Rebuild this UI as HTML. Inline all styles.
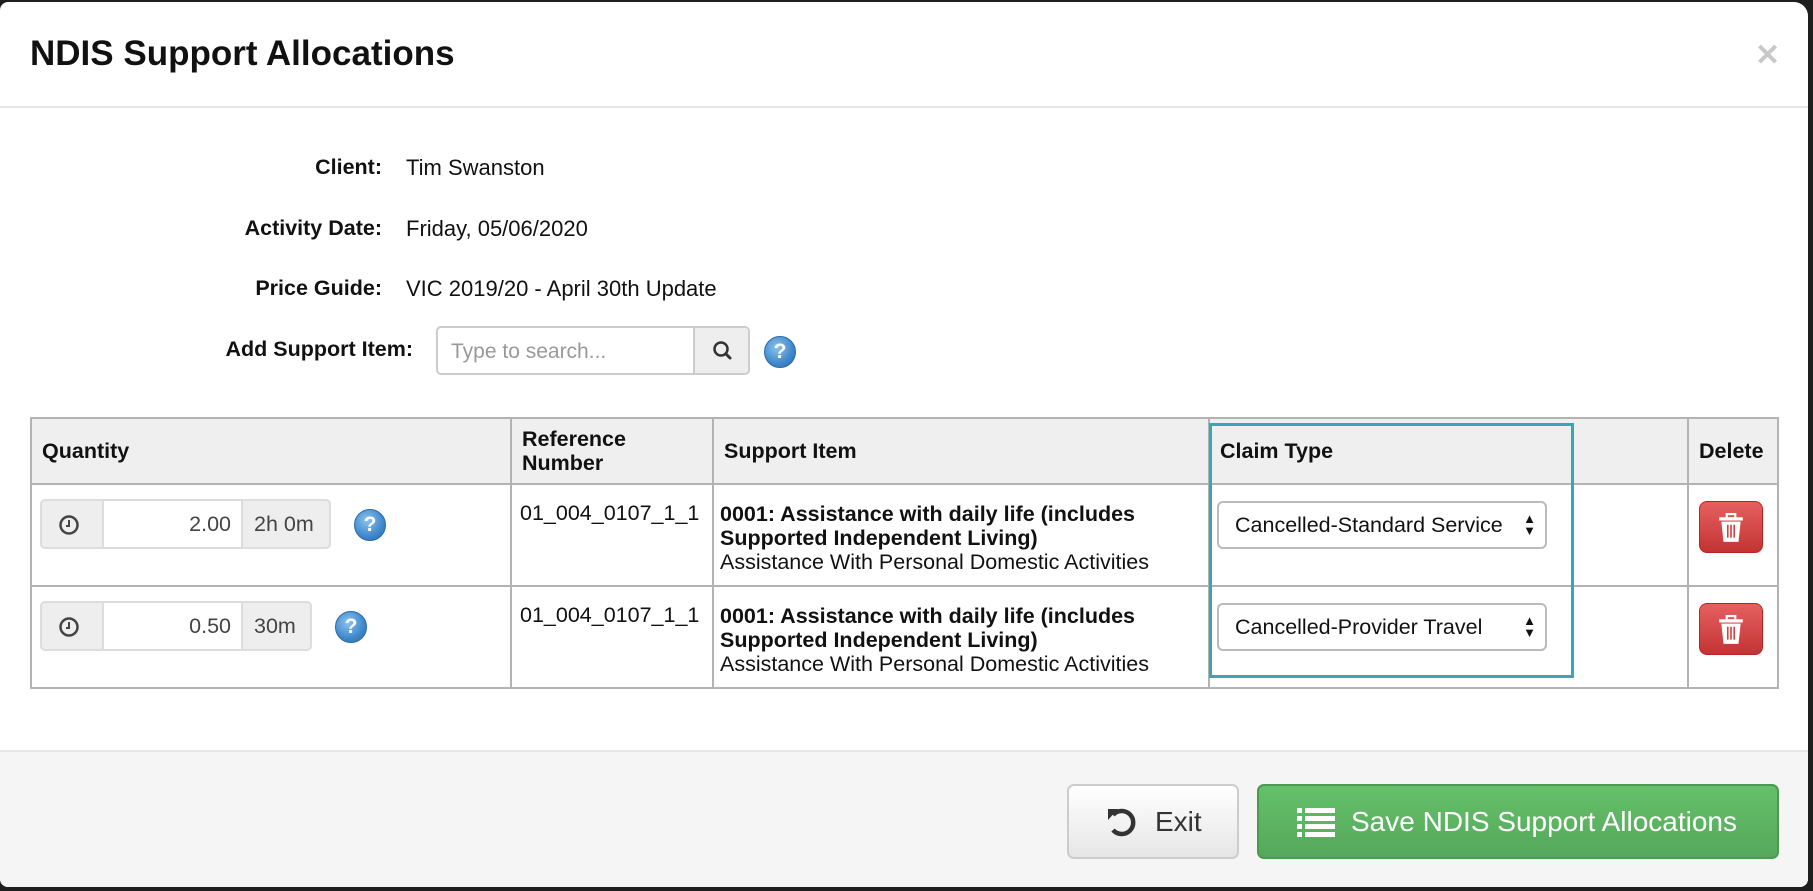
<!DOCTYPE html>
<html><head><meta charset="utf-8"><style>
*{box-sizing:border-box;margin:0;padding:0}
body{width:1813px;height:891px;background:#1e1e1e;position:relative;overflow:hidden;font-family:"Liberation Sans",Arial,sans-serif;color:#111}
.modal{position:absolute;left:0;top:2px;width:1808px;height:885px;background:#fff;border-radius:8px 14px 8px 8px;overflow:hidden}
.a{position:absolute}
.title{left:30px;top:32px;font-size:35px;font-weight:bold;letter-spacing:0px;color:#111}
.close{left:1755px;top:36px;font-size:30px;font-weight:bold;color:#c8c8c8}
.hsep{left:0;top:104px;width:1808px;height:2px;background:#e5e5e5}
.lbl{font-size:21.5px;font-weight:bold;text-align:right;width:300px}
.val{font-size:22px}
.search{left:436px;top:324px;width:314px;height:49px;border:2px solid #ccc;border-radius:5px;background:#fff}
.search .ph{position:absolute;left:13px;top:12px;font-size:21px;color:#999}
.search .btn{position:absolute;left:255px;top:0;width:55px;height:45px;background:#eee;border-left:2px solid #ccc;border-radius:0 4px 4px 0}
.help{width:32px;height:32px;border-radius:50%;background:radial-gradient(circle at 40% 35%,#8cc3ee,#3f88cc 60%,#2a6aa8);border:1px solid #2c6aa5;color:#fff;font-weight:bold;font-size:21px;text-align:center;line-height:30px}
table{position:absolute;left:30px;top:415px;width:1749px;border-collapse:collapse}
td,th{border:2px solid #b3b3b3;vertical-align:top;text-align:left;font-size:21.5px}
th{background:#efefef;height:66px;vertical-align:middle;font-weight:bold;padding:0 10px;line-height:24px}
td{height:102px}
.grp{position:absolute;height:50px;border:2px solid #ddd;border-radius:5px;background:#eee}
.grp .in{position:absolute;left:60px;top:0;width:141px;height:46px;background:#fff;border-left:2px solid #ddd;border-right:2px solid #ddd;text-align:right;padding-right:10px;line-height:46px;font-size:21.5px;color:#444}
.grp .sf{position:absolute;left:212px;top:0;line-height:46px;font-size:21.5px;color:#444}
.sel{position:absolute;left:1217px;width:330px;height:48px;border:2px solid #bbb;border-radius:6px;background:#fff;font-size:21.5px;line-height:44px;padding-left:16px}
.sel .ar{position:absolute;right:9px;top:10px;font-size:13px;line-height:12px}
.del{position:absolute;left:1699px;width:64px;height:52px;border-radius:8px;background:linear-gradient(#e66060,#c33434);border:1px solid #b22}
.sup{position:absolute;left:720px;font-size:21.5px;line-height:24px}
.btnx{position:absolute;top:782px;height:75px;border-radius:7px;font-size:28px;line-height:71px}
</style></head><body>
<div class="modal">
<div class="a title">NDIS Support Allocations</div>
<div class="a close">✕</div>
<div class="a hsep"></div>
<div class="a lbl" style="left:82px;top:153px">Client:</div><div class="a val" style="left:406px;top:153px">Tim Swanston</div>
<div class="a lbl" style="left:82px;top:214px">Activity Date:</div><div class="a val" style="left:406px;top:214px">Friday, 05/06/2020</div>
<div class="a lbl" style="left:82px;top:274px">Price Guide:</div><div class="a val" style="left:406px;top:274px">VIC 2019/20 - April 30th Update</div>
<div class="a lbl" style="left:113px;top:335px">Add Support Item:</div>
<div class="a search"><div class="ph">Type to search...</div><div class="btn"><svg width="55" height="45" viewBox="0 0 55 45"><circle cx="26" cy="21" r="6.5" fill="none" stroke="#333" stroke-width="2.5"/><line x1="31" y1="26" x2="35" y2="30" stroke="#333" stroke-width="3" stroke-linecap="round"/></svg></div></div>
<div class="a help" style="left:764px;top:334px">?</div>

<table>
<tr><th style="width:480px">Quantity</th><th style="width:202px">Reference<br>Number</th><th style="width:496px">Support Item</th><th style="width:479px">Claim Type</th><th>Delete</th></tr>
<tr><td></td><td style="padding:16px 0 0 8px">01_004_0107_1_1</td><td></td><td></td><td></td></tr>
<tr><td></td><td style="padding:16px 0 0 8px">01_004_0107_1_1</td><td></td><td></td><td></td></tr>
</table>
<div class="a" style="left:1209px;top:421px;width:365px;height:255px;border:3px solid #36a7b3"></div>

<div class="grp" style="left:40px;top:497px;width:291px"><svg class="a" style="left:16px;top:13px" width="22" height="22" viewBox="0 0 22 22"><circle cx="11" cy="11" r="8.5" fill="none" stroke="#444" stroke-width="2.5"/><path d="M11 6v6H8" fill="none" stroke="#444" stroke-width="2"/></svg><div class="in">2.00</div><div class="sf">2h 0m</div></div>
<div class="a help" style="left:354px;top:507px">?</div>
<div class="grp" style="left:40px;top:599px;width:272px"><svg class="a" style="left:16px;top:13px" width="22" height="22" viewBox="0 0 22 22"><circle cx="11" cy="11" r="8.5" fill="none" stroke="#444" stroke-width="2.5"/><path d="M11 6v6H8" fill="none" stroke="#444" stroke-width="2"/></svg><div class="in">0.50</div><div class="sf">30m</div></div>
<div class="a help" style="left:335px;top:609px">?</div>

<div class="sup" style="top:500px"><b>0001: Assistance with daily life (includes<br>Supported Independent Living)</b><br>Assistance With Personal Domestic Activities</div>
<div class="sup" style="top:602px"><b>0001: Assistance with daily life (includes<br>Supported Independent Living)</b><br>Assistance With Personal Domestic Activities</div>

<div class="sel" style="top:499px">Cancelled-Standard Service<div class="ar">▲<br>▼</div></div>
<div class="sel" style="top:601px">Cancelled-Provider Travel<div class="ar">▲<br>▼</div></div>

<div class="del" style="top:499px"><svg class="a" style="left:17px;top:11px" width="28" height="30" viewBox="0 0 26 28"><rect x="2" y="4" width="22" height="3" fill="#fff"/><rect x="9" y="1" width="8" height="4" fill="none" stroke="#fff" stroke-width="2"/><path d="M4 8h18l-2 19H6z" fill="#fff"/><path d="M10 11v12M13 11v12M16 11v12" stroke="#d04040" stroke-width="1.5"/></svg></div>
<div class="del" style="top:601px"><svg class="a" style="left:17px;top:11px" width="28" height="30" viewBox="0 0 26 28"><rect x="2" y="4" width="22" height="3" fill="#fff"/><rect x="9" y="1" width="8" height="4" fill="none" stroke="#fff" stroke-width="2"/><path d="M4 8h18l-2 19H6z" fill="#fff"/><path d="M10 11v12M13 11v12M16 11v12" stroke="#d04040" stroke-width="1.5"/></svg></div>

<div class="a" style="left:0;top:748px;width:1808px;height:140px;background:#f5f5f5;border-top:2px solid #e5e5e5"></div>
<div class="btnx" style="left:1067px;width:172px;background:linear-gradient(#fff,#e6e6e6);border:2px solid #ccc;color:#333;padding-left:86px">Exit
<svg class="a" style="left:36px;top:19px" width="34" height="34" viewBox="0 0 34 34"><path d="M8 10 A11.5 11.5 0 1 1 8 25" fill="none" stroke="#333" stroke-width="4.5"/><path d="M3 4 L13 4 L3 15 Z" fill="#333"/></svg></div>
<div class="btnx" style="left:1257px;width:522px;background:linear-gradient(#65c06a,#55a85a);border:2px solid #4c9a50;color:#fff;padding-left:92px">Save NDIS Support Allocations
<svg class="a" style="left:38px;top:21px" width="38" height="32" viewBox="0 0 38 32"><g fill="#fff"><rect x="0" y="1" width="5" height="5"/><rect x="8" y="1" width="30" height="5"/><rect x="0" y="9" width="5" height="5"/><rect x="8" y="9" width="30" height="5"/><rect x="0" y="17" width="5" height="5"/><rect x="8" y="17" width="30" height="5"/><rect x="0" y="25" width="5" height="5"/><rect x="8" y="25" width="30" height="5"/></g></svg></div>
</div>
</body></html>
